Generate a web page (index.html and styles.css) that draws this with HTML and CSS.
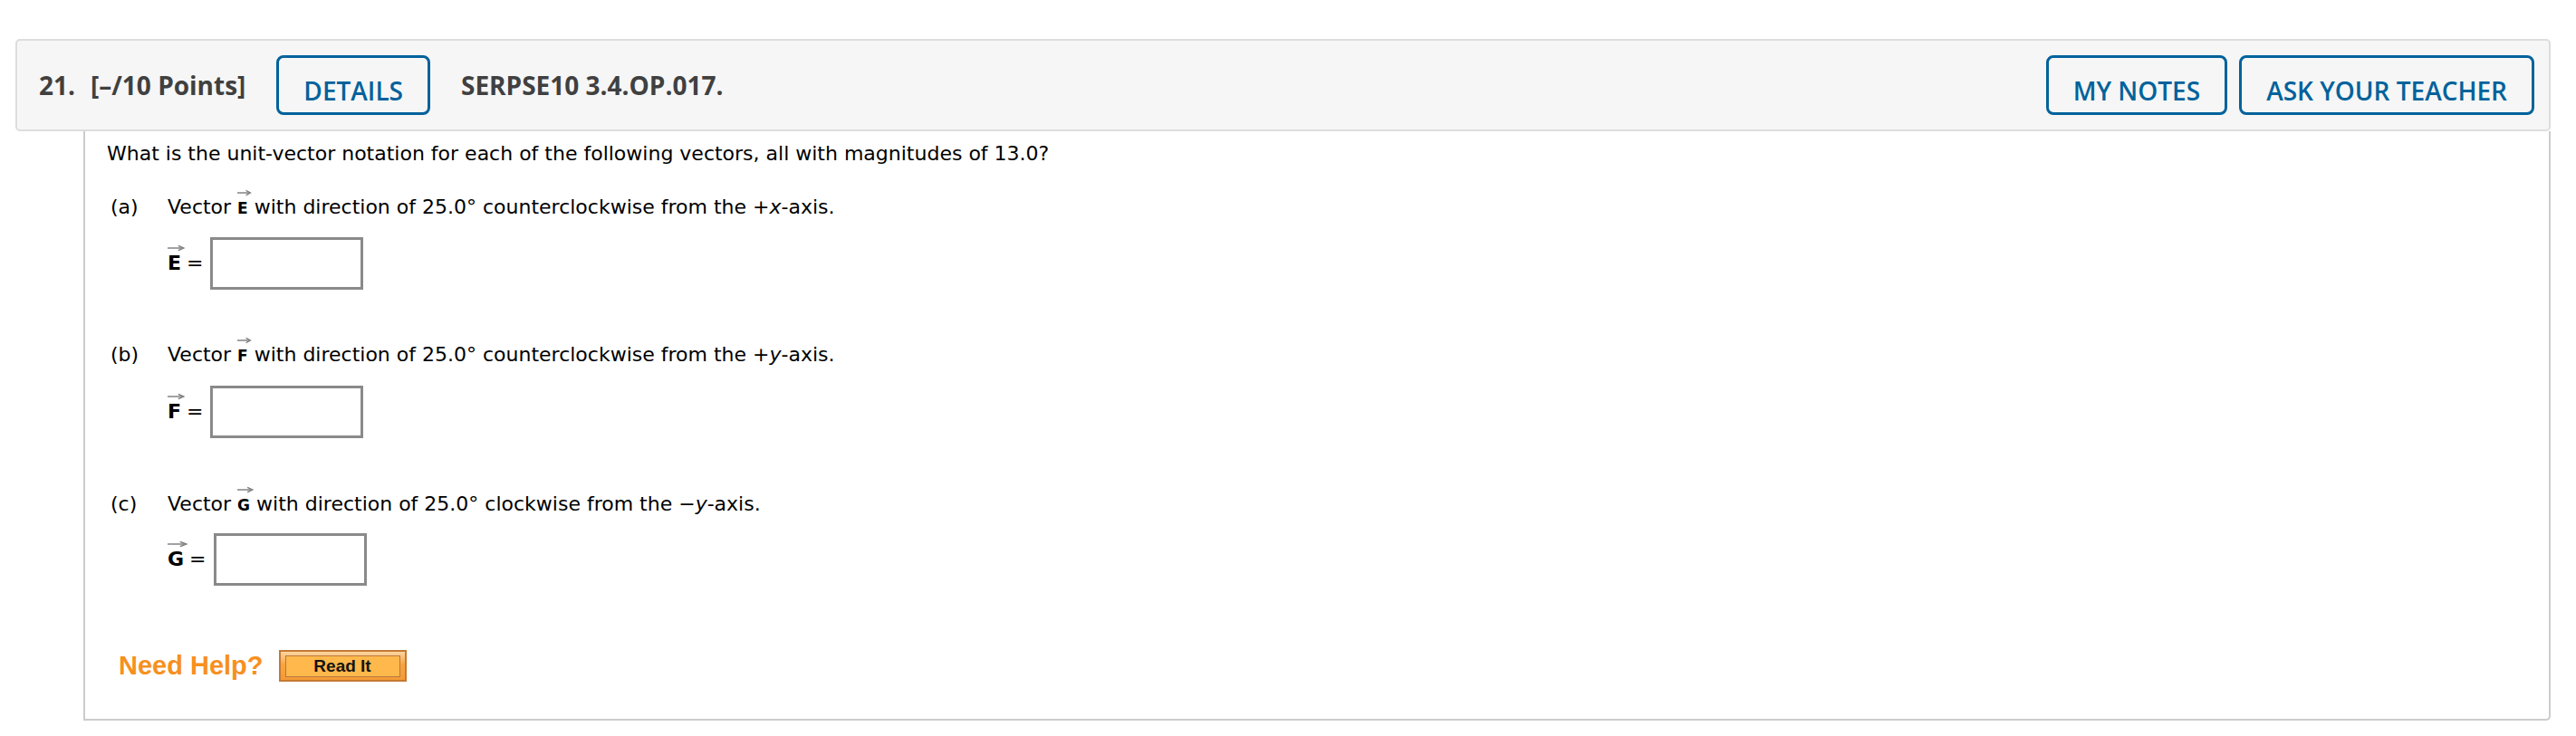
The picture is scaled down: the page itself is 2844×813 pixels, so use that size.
FILE: index.html
```html
<!DOCTYPE html>
<html lang="en">
<head>
<meta charset="utf-8">
<title>Question 21</title>
<link rel="stylesheet" href="styles.css">
</head>
<body>
<div class="question">
  <div class="qhead">
    <span class="qnum">21.</span>
    <span class="qpts">[–/10 Points]</span>
    <span class="hbtn details">DETAILS</span>
    <span class="qcode">SERPSE10 3.4.OP.017.</span>
    <div class="hright">
      <span class="hbtn">MY NOTES</span>
      <span class="hbtn">ASK YOUR TEACHER</span>
    </div>
  </div>
  <div class="qbody">
    <p class="intro">What is the unit-vector notation for each of the following vectors, all with magnitudes of 13.0?</p>

    <div class="part part-a">
      <div class="pline"><span class="plabel">(a)</span><span class="ptext">Vector <span class="vec sm">E<svg class="arrow" viewBox="0 0 16 6" preserveAspectRatio="none"><path d="M0 3H14.5" stroke="#7a7a7a" stroke-width="1.4" fill="none"/><path d="M10.5 0.4L15.8 3L10.5 5.6" stroke="#7a7a7a" stroke-width="1.3" fill="none"/></svg></span> with direction of 25.0° counterclockwise from the +<i>x</i>-axis.</span></div>
      <div class="answer"><span class="vec lg">E<svg class="arrow" viewBox="0 0 16 6" preserveAspectRatio="none"><path d="M0 3H14.5" stroke="#7a7a7a" stroke-width="1.4" fill="none"/><path d="M10.5 0.4L15.8 3L10.5 5.6" stroke="#7a7a7a" stroke-width="1.3" fill="none"/></svg></span><span class="eq">=</span><span class="box"></span></div>
    </div>

    <div class="part part-b">
      <div class="pline"><span class="plabel">(b)</span><span class="ptext">Vector <span class="vec sm">F<svg class="arrow" viewBox="0 0 16 6" preserveAspectRatio="none"><path d="M0 3H14.5" stroke="#7a7a7a" stroke-width="1.4" fill="none"/><path d="M10.5 0.4L15.8 3L10.5 5.6" stroke="#7a7a7a" stroke-width="1.3" fill="none"/></svg></span> with direction of 25.0° counterclockwise from the +<i>y</i>-axis.</span></div>
      <div class="answer"><span class="vec lg">F<svg class="arrow" viewBox="0 0 16 6" preserveAspectRatio="none"><path d="M0 3H14.5" stroke="#7a7a7a" stroke-width="1.4" fill="none"/><path d="M10.5 0.4L15.8 3L10.5 5.6" stroke="#7a7a7a" stroke-width="1.3" fill="none"/></svg></span><span class="eq">=</span><span class="box"></span></div>
    </div>

    <div class="part part-c">
      <div class="pline"><span class="plabel">(c)</span><span class="ptext">Vector <span class="vec sm">G<svg class="arrow" viewBox="0 0 16 6" preserveAspectRatio="none"><path d="M0 3H14.5" stroke="#7a7a7a" stroke-width="1.4" fill="none"/><path d="M10.5 0.4L15.8 3L10.5 5.6" stroke="#7a7a7a" stroke-width="1.3" fill="none"/></svg></span> with direction of 25.0° clockwise from the −<i>y</i>-axis.</span></div>
      <div class="answer"><span class="vec lg">G<svg class="arrow" viewBox="0 0 16 6" preserveAspectRatio="none"><path d="M0 3H14.5" stroke="#7a7a7a" stroke-width="1.4" fill="none"/><path d="M10.5 0.4L15.8 3L10.5 5.6" stroke="#7a7a7a" stroke-width="1.3" fill="none"/></svg></span><span class="eq">=</span><span class="box"></span></div>
    </div>

    <div class="help">
      <span class="needhelp">Need Help?</span>
      <span class="readit"><span class="readit-in">Read It</span></span>
    </div>
  </div>
</div>
</body>
</html>
```

FILE: styles.css
```css
html, body {
  margin: 0;
  padding: 0;
  background: #ffffff;
}

body {
  font-family: "DejaVu Sans", Verdana, sans-serif;
  color: #000000;
}

.question {
  margin: 43px 28px 0 17px;
}

/* ---------- header ---------- */
.qhead {
  box-sizing: border-box;
  height: 102px;
  display: flex;
  align-items: center;
  background: #f6f6f6;
  border: 2px solid #dddddd;
  border-radius: 5px;
  padding: 0 16px 0 24px;
  font-family: "Open Sans", "Liberation Sans", sans-serif;
}

.qnum,
.qpts,
.qcode {
  font-size: 28px;
  font-weight: 700;
  color: #404040;
  line-height: 38px;
  white-space: nowrap;
}

.qnum {
  margin-right: 17px;
}

.hbtn {
  box-sizing: border-box;
  display: inline-block;
  height: 66px;
  padding: 17px 27px 0;
  border: 3px solid #00629b;
  border-radius: 8px;
  font-family: "Open Sans", "Liberation Sans", sans-serif;
  font-size: 28px;
  font-weight: 600;
  line-height: 38px;
  color: #00629b;
  white-space: nowrap;
}

.details {
  margin: 0 34px;
}

.hright {
  margin-left: auto;
  display: flex;
  gap: 13px;
}

/* ---------- body ---------- */
.qbody {
  margin-left: 75px;
  border: 2px solid #cccccc;
  border-top: none;
  border-bottom-right-radius: 5px;
  padding: 10px 24px 41px;
  font-size: 22px;
  line-height: 30px;
}

.intro {
  margin: 0;
}

.part {
  padding-left: 4px;
}

.part-a {
  margin-top: 29px;
}

.part-b {
  margin-top: 57px;
}

.part-c {
  margin-top: 58px;
}

.pline {
  display: flex;
  white-space: nowrap;
}

.plabel {
  display: inline-block;
  width: 63px;
  flex: none;
}

.vec {
  position: relative;
  display: inline-block;
  font-weight: 700;
  line-height: 1;
}

.vec.sm {
  font-size: 17px;
}

.vec.lg {
  font-size: 22px;
}

.vec .arrow {
  position: absolute;
  left: 0;
  width: calc(100% + 3px);
  height: 6px;
  overflow: visible;
}

.vec.sm .arrow {
  top: -12px;
}

.vec.lg .arrow {
  top: -9px;
}

.answer {
  display: flex;
  align-items: center;
  height: 58px;
  margin-top: 18px;
  padding-left: 63px;
}

.part-b .answer {
  margin-top: 19px;
}

.part-c .answer {
  margin-top: 17px;
}

.eq {
  margin: 0 8px 0 6px;
}

.box {
  box-sizing: border-box;
  display: inline-block;
  width: 169px;
  height: 58px;
  border: 3px solid #8a8a8a;
  background: #ffffff;
}

/* ---------- need help ---------- */
.help {
  display: flex;
  align-items: center;
  margin-top: 71px;
  padding-left: 13px;
  height: 35px;
}

.needhelp {
  font-family: "Liberation Sans", Arial, sans-serif;
  font-size: 29px;
  font-weight: 700;
  color: #f7901e;
  line-height: 35px;
}

.readit {
  box-sizing: border-box;
  display: flex;
  width: 141px;
  height: 35px;
  margin-left: 17px;
  padding: 4px 5px 3px;
  border: 2px solid #c47a33;
  background: linear-gradient(#fcd6a2 0%, #f9a43f 45%, #f49a36 100%);
}

.readit-in {
  flex: 1;
  display: flex;
  align-items: center;
  justify-content: center;
  border: 1px solid #b57a40;
  background: #ffb84b;
  font-family: "Liberation Sans", Arial, sans-serif;
  font-size: 19px;
  font-weight: 700;
  color: #141414;
}
```
